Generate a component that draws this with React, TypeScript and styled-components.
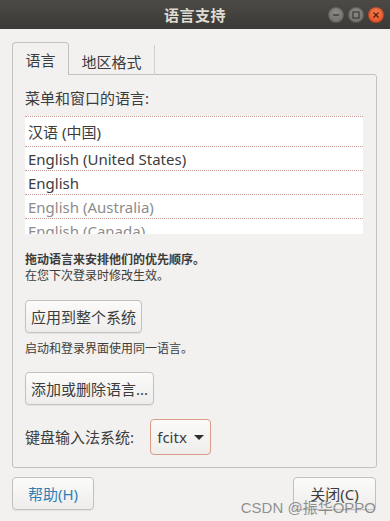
import React from "react";
import styled, { createGlobalStyle } from "styled-components";

const Global = createGlobalStyle`
  html, body { margin: 0; padding: 0; }
  body {
    background: #f2f1f0;
    font-family: "Noto Sans", "Noto Sans CJK SC", sans-serif;
    color: #3c3c3c;
  }
`;

const Window = styled.div`
  position: relative;
  width: 390px;
  height: 521px;
  overflow: hidden;
  background: #f2f1f0;
  display: flex;
  flex-direction: column;
`;

const TitleBar = styled.div`
  height: 29px;
  flex: none;
  background: linear-gradient(#4b4a46, #3b3a36);
  display: flex;
  align-items: center;
  justify-content: center;
  position: relative;
`;

const Title = styled.div`
  color: #dfdbd2;
  font-size: 15px;
  font-weight: bold;
  font-family: "Noto Sans CJK SC", sans-serif;
  letter-spacing: 0.5px;
`;

const Controls = styled.div`
  position: absolute;
  right: 6px;
  top: 7px;
  display: flex;
  gap: 4px;
`;

const Circle = styled.div<{ $close?: boolean }>`
  width: 16px;
  height: 16px;
  border-radius: 50%;
  background: ${(p) =>
    p.$close
      ? "radial-gradient(circle at 50% 35%, #f47b51, #df4a1a)"
      : "radial-gradient(circle at 50% 35%, #8b8a86, #6a6965)"};
  box-shadow: inset 0 0 0 1px rgba(0, 0, 0, 0.25);
  display: flex;
  align-items: center;
  justify-content: center;
`;

const Body = styled.div`
  flex: 1;
  padding: 13px 13px 0 12px;
  display: flex;
  flex-direction: column;
`;

const Tabs = styled.div`
  display: flex;
  height: 33px;
  align-items: flex-end;
  position: relative;
  z-index: 1;
  margin-bottom: -1px;
`;

const Tab = styled.div<{ $active?: boolean }>`
  height: ${(p) => (p.$active ? "33px" : "30px")};
  box-sizing: border-box;
  display: flex;
  align-items: center;
  justify-content: center;
  font-size: 15px;
  color: #3c3c3c;
  white-space: nowrap;
  padding: 0;
  ${(p) =>
    p.$active
      ? `
    border: 1px solid #c4c1bc;
    border-bottom: none;
    border-radius: 4px 4px 0 0;
    background: #f2f1f0;
    width: 57px;
    padding-top: 1px;
  `
      : `
    border-right: 1px solid #d3d0cc;
    width: 86px;
    padding-top: 2px;
  `}
`;

const Panel = styled.div`
  height: 394px;
  box-sizing: border-box;
  border: 1px solid #c4c1bc;
  border-radius: 0 3px 3px 3px;
  padding: 13px 13px 0 12px;
  display: flex;
  flex-direction: column;
`;

const Label = styled.div`
  font-size: 15px;
  line-height: 21px;
  color: #3c3c3c;
  white-space: nowrap;
`;

const List = styled.div`
  margin-top: 7px;
  height: 118px;
  overflow: hidden;
  background: #ffffff;
`;

const Row = styled.div<{ $tall?: boolean; $dim?: boolean }>`
  height: ${(p) => (p.$tall ? "30px" : "24px")};
  box-sizing: border-box;
  border-top: 1px dotted #c99b94;
  padding-left: 3px;
  display: flex;
  align-items: center;
  font-size: 15px;
  color: ${(p) => (p.$dim ? "#8c8c8c" : "#3c3c3c")};
  flex: none;
`;

const Note = styled.div<{ $bold?: boolean }>`
  font-size: 12px;
  line-height: 16px;
  font-weight: ${(p) => (p.$bold ? "bold" : "normal")};
  color: #3c3c3c;
`;

const Notes = styled.div<{ $top: number }>`
  margin-top: ${(p) => p.$top}px;
  display: flex;
  flex-direction: column;
`;

const Button = styled.button<{ $w: number; $top?: number; $blue?: boolean }>`
  width: ${(p) => p.$w}px;
  height: 33px;
  margin-top: ${(p) => p.$top ?? 0}px;
  box-sizing: border-box;
  border: 1px solid #c4c1bc;
  border-radius: 4px;
  background: linear-gradient(#fbfbfa, #eeedeb);
  box-shadow: 0 1px 1px rgba(0, 0, 0, 0.06);
  font-family: "Noto Sans", "Noto Sans CJK SC", sans-serif;
  font-size: 15px;
  color: ${(p) => (p.$blue ? "#2f80b6" : "#3c3c3c")};
  padding: 0;
  display: flex;
  align-items: center;
  justify-content: center;
  flex: none;
`;

const KeyRow = styled.div`
  margin-top: 14px;
  display: flex;
  align-items: center;
  gap: 16px;
`;

const Dropdown = styled.div`
  width: 61px;
  height: 36px;
  box-sizing: border-box;
  border: 1px solid #d99b88;
  border-radius: 4px;
  background: linear-gradient(#fbfbfa, #eeedeb);
  display: flex;
  align-items: center;
  justify-content: center;
  gap: 7px;
  font-size: 15px;
  color: #3c3c3c;
  padding-bottom: 1px;
`;

const Arrow = styled.span`
  width: 0;
  height: 0;
  border-left: 5px solid transparent;
  border-right: 5px solid transparent;
  border-top: 5px solid #2e2e2e;
  margin-top: 2px;
`;

const Footer = styled.div`
  margin-top: 9px;
  display: flex;
  justify-content: space-between;
  padding-right: 1px;
`;

const Watermark = styled.div`
  position: absolute;
  right: 14px;
  bottom: 4px;
  font-family: "Liberation Sans", "Noto Sans CJK SC", sans-serif;
  font-size: 15px;
  color: rgba(110, 110, 110, 0.75);
  white-space: nowrap;
`;

export default function App() {
  return (
    <>
      <Global />
      <Window>
        <TitleBar>
          <Title>语言支持</Title>
          <Controls>
            <Circle>
              <svg width="8" height="8" viewBox="0 0 8 8">
                <line x1="1" y1="4" x2="7" y2="4" stroke="#3b3a36" strokeWidth="1.4" />
              </svg>
            </Circle>
            <Circle>
              <svg width="8" height="8" viewBox="0 0 8 8">
                <rect x="1" y="1" width="6" height="6" fill="none" stroke="#3b3a36" strokeWidth="1.2" />
              </svg>
            </Circle>
            <Circle $close>
              <svg width="8" height="8" viewBox="0 0 8 8">
                <path d="M1.5 1.5 L6.5 6.5 M6.5 1.5 L1.5 6.5" stroke="#5a1d08" strokeWidth="1.3" />
              </svg>
            </Circle>
          </Controls>
        </TitleBar>
        <Body>
          <Tabs>
            <Tab $active>语言</Tab>
            <Tab>地区格式</Tab>
          </Tabs>
          <Panel>
            <Label>菜单和窗口的语言:</Label>
            <List>
              <Row $tall>汉语 (中国)</Row>
              <Row>English (United States)</Row>
              <Row>English</Row>
              <Row $dim>English (Australia)</Row>
              <Row $dim>English (Canada)</Row>
            </List>
            <Notes $top={18}>
              <Note $bold>拖动语言来安排他们的优先顺序。</Note>
              <Note>在您下次登录时修改生效。</Note>
            </Notes>
            <Button $w={117} $top={16}>应用到整个系统</Button>
            <Notes $top={8}>
              <Note>启动和登录界面使用同一语言。</Note>
            </Notes>
            <Button $w={129} $top={15}>添加或删除语言...</Button>
            <KeyRow>
              <Label>键盘输入法系统:</Label>
              <Dropdown>
                fcitx
                <Arrow />
              </Dropdown>
            </KeyRow>
          </Panel>
          <Footer>
            <Button $w={82} $blue>帮助(H)</Button>
            <Button $w={83}>关闭(C)</Button>
          </Footer>
        </Body>
        <Watermark>CSDN @振华OPPO</Watermark>
      </Window>
    </>
  );
}
